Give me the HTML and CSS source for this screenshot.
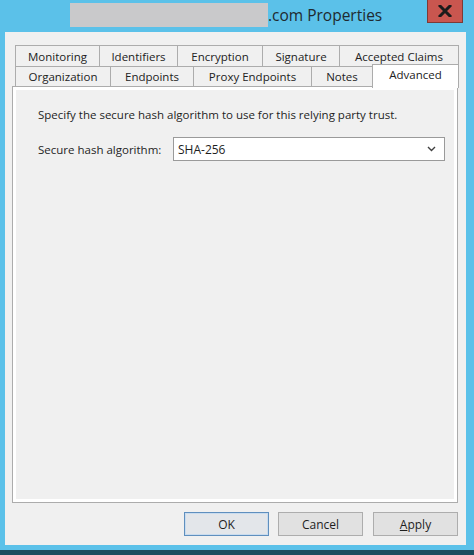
FILE: index.html
```html
<!DOCTYPE html>
<html>
<head>
<meta charset="utf-8">
<link rel="stylesheet" href="styles.css">
</head>
<body>
<div class="frame">
  <div class="titlebar">
    <div class="title">
      <span class="redacted"></span><span class="title-text">.com Properties</span>
    </div>
    <div class="close">
      <svg width="14" height="12" viewBox="0 0 14 12"><path d="M2 1 L12 11 M12 1 L2 11" stroke="#1b1b1b" stroke-width="3" stroke-linecap="square"/></svg>
    </div>
  </div>
  <div class="client">
    <div class="tabs">
      <div class="tab-row row1">
        <div class="tab" style="width:85px">Monitoring</div>
        <div class="tab" style="width:79px">Identifiers</div>
        <div class="tab" style="width:86px">Encryption</div>
        <div class="tab" style="width:78px">Signature</div>
        <div class="tab" style="width:120px">Accepted Claims</div>
      </div>
      <div class="tab-row row2">
        <div class="tab" style="width:96px">Organization</div>
        <div class="tab" style="width:84px">Endpoints</div>
        <div class="tab" style="width:119px">Proxy Endpoints</div>
        <div class="tab" style="width:62px">Notes</div>
        <div class="tab selected" style="width:87px">Advanced</div>
      </div>
    </div>
    <div class="panel">
      <div class="page">
        <p class="desc">Specify the secure hash algorithm to use for this relying party trust.</p>
        <div class="field">
          <span class="label">Secure hash algorithm:</span>
          <div class="combo">
            <span class="combo-value">SHA-256</span>
            <svg class="chevron" width="9" height="6" viewBox="0 0 9 6"><path d="M1 1 L4.5 4.5 L8 1" fill="none" stroke="#404040" stroke-width="1.4"/></svg>
          </div>
        </div>
      </div>
    </div>
    <div class="buttons">
      <div class="btn default">OK</div>
      <div class="btn">Cancel</div>
      <div class="btn"><u>A</u>pply</div>
    </div>
  </div>
  <div class="taskbar"></div>
</div>
</body>
</html>
```

FILE: styles.css
```css
html, body {
  margin: 0;
  padding: 0;
}
body {
  width: 474px;
  height: 555px;
  overflow: hidden;
  background: #5bc1e9;
  font-family: "Open Sans", "Noto Sans", sans-serif;
  font-size: 11.5px;
  color: #1e1e1e;
}
.frame {
  display: flex;
  flex-direction: column;
  height: 555px;
}
.titlebar {
  height: 32px;
  display: flex;
  align-items: flex-start;
  background: #5bc1e9;
}
.title {
  display: flex;
  align-items: center;
  margin-left: 70px;
  margin-top: 3px;
  height: 24px;
}
.redacted {
  display: block;
  width: 198px;
  height: 24px;
  background: #c9c9cb;
}
.title-text {
  font-size: 15.5px;
  color: #1f2a30;
  margin-top: -1px;
}
.close {
  margin-left: auto;
  margin-right: 11px;
  width: 34px;
  height: 22px;
  background: #c9564f;
  border: 1px solid #7d3a36;
  border-top: none;
  display: flex;
  align-items: center;
  justify-content: center;
}
.client {
  margin: 0 8px 0 5px;
  height: 513px;
  background: #f0f0f0;
  box-sizing: border-box;
  padding: 13px 8px 0 7px;
  display: flex;
  flex-direction: column;
}
.tabs {
  margin-left: 3px;
  display: flex;
  flex-direction: column;
}
.tab-row {
  display: flex;
}
.row1 {
  height: 21px;
}
.row2 {
  height: 20px;
  align-items: flex-start;
}
.tab {
  box-sizing: border-box;
  border: 1px solid #acacac;
  border-bottom: none;
  background: #f0f0f0;
  margin-right: -1px;
  display: flex;
  align-items: center;
  justify-content: center;
  white-space: nowrap;
  color: #222;
}
.row1 .tab {
  height: 21px;
}
.row2 .tab {
  height: 20px;
}
.row2 .tab.selected {
  position: relative;
  z-index: 1;
  height: 24px;
  margin-top: -2px;
  background: #ffffff;
  align-items: flex-start;
  padding-top: 2px;
}
.panel {
  height: 417px;
  box-sizing: border-box;
  border: 1px solid #acacac;
  background: #ffffff;
  padding: 3px;
}
.page {
  height: 100%;
  background: #f0f0f0;
  box-sizing: border-box;
  padding: 17px 0 0 22px;
}
.desc {
  margin: 0;
  line-height: 16px;
}
.field {
  display: flex;
  align-items: center;
  margin-top: 14px;
}
.label {
  width: 135px;
  white-space: nowrap;
}
.combo {
  width: 272px;
  height: 24px;
  box-sizing: border-box;
  border: 1px solid #9a9a9a;
  background: #ffffff;
  display: flex;
  align-items: center;
  padding: 0 8px 0 4px;
}
.combo-value {
  flex: 1;
  font-size: 12px;
}
.chevron {
  display: block;
}
.buttons {
  display: flex;
  justify-content: flex-end;
  gap: 9px;
  margin-top: 9px;
}
.btn {
  width: 85px;
  height: 24px;
  box-sizing: border-box;
  border: 1px solid #adadad;
  background: #e1e1e1;
  display: flex;
  align-items: center;
  justify-content: center;
  font-size: 12px;
}
.btn + .btn + .btn {
  margin-left: 1px;
}
.btn.default {
  border-color: #5f8fbe;
  box-shadow: inset 0 0 0 1px #c9dcef;
  background: #e3e6ea;
}
.taskbar {
  margin-top: 5px;
  height: 5px;
  background: #1d4e60;
}
```
